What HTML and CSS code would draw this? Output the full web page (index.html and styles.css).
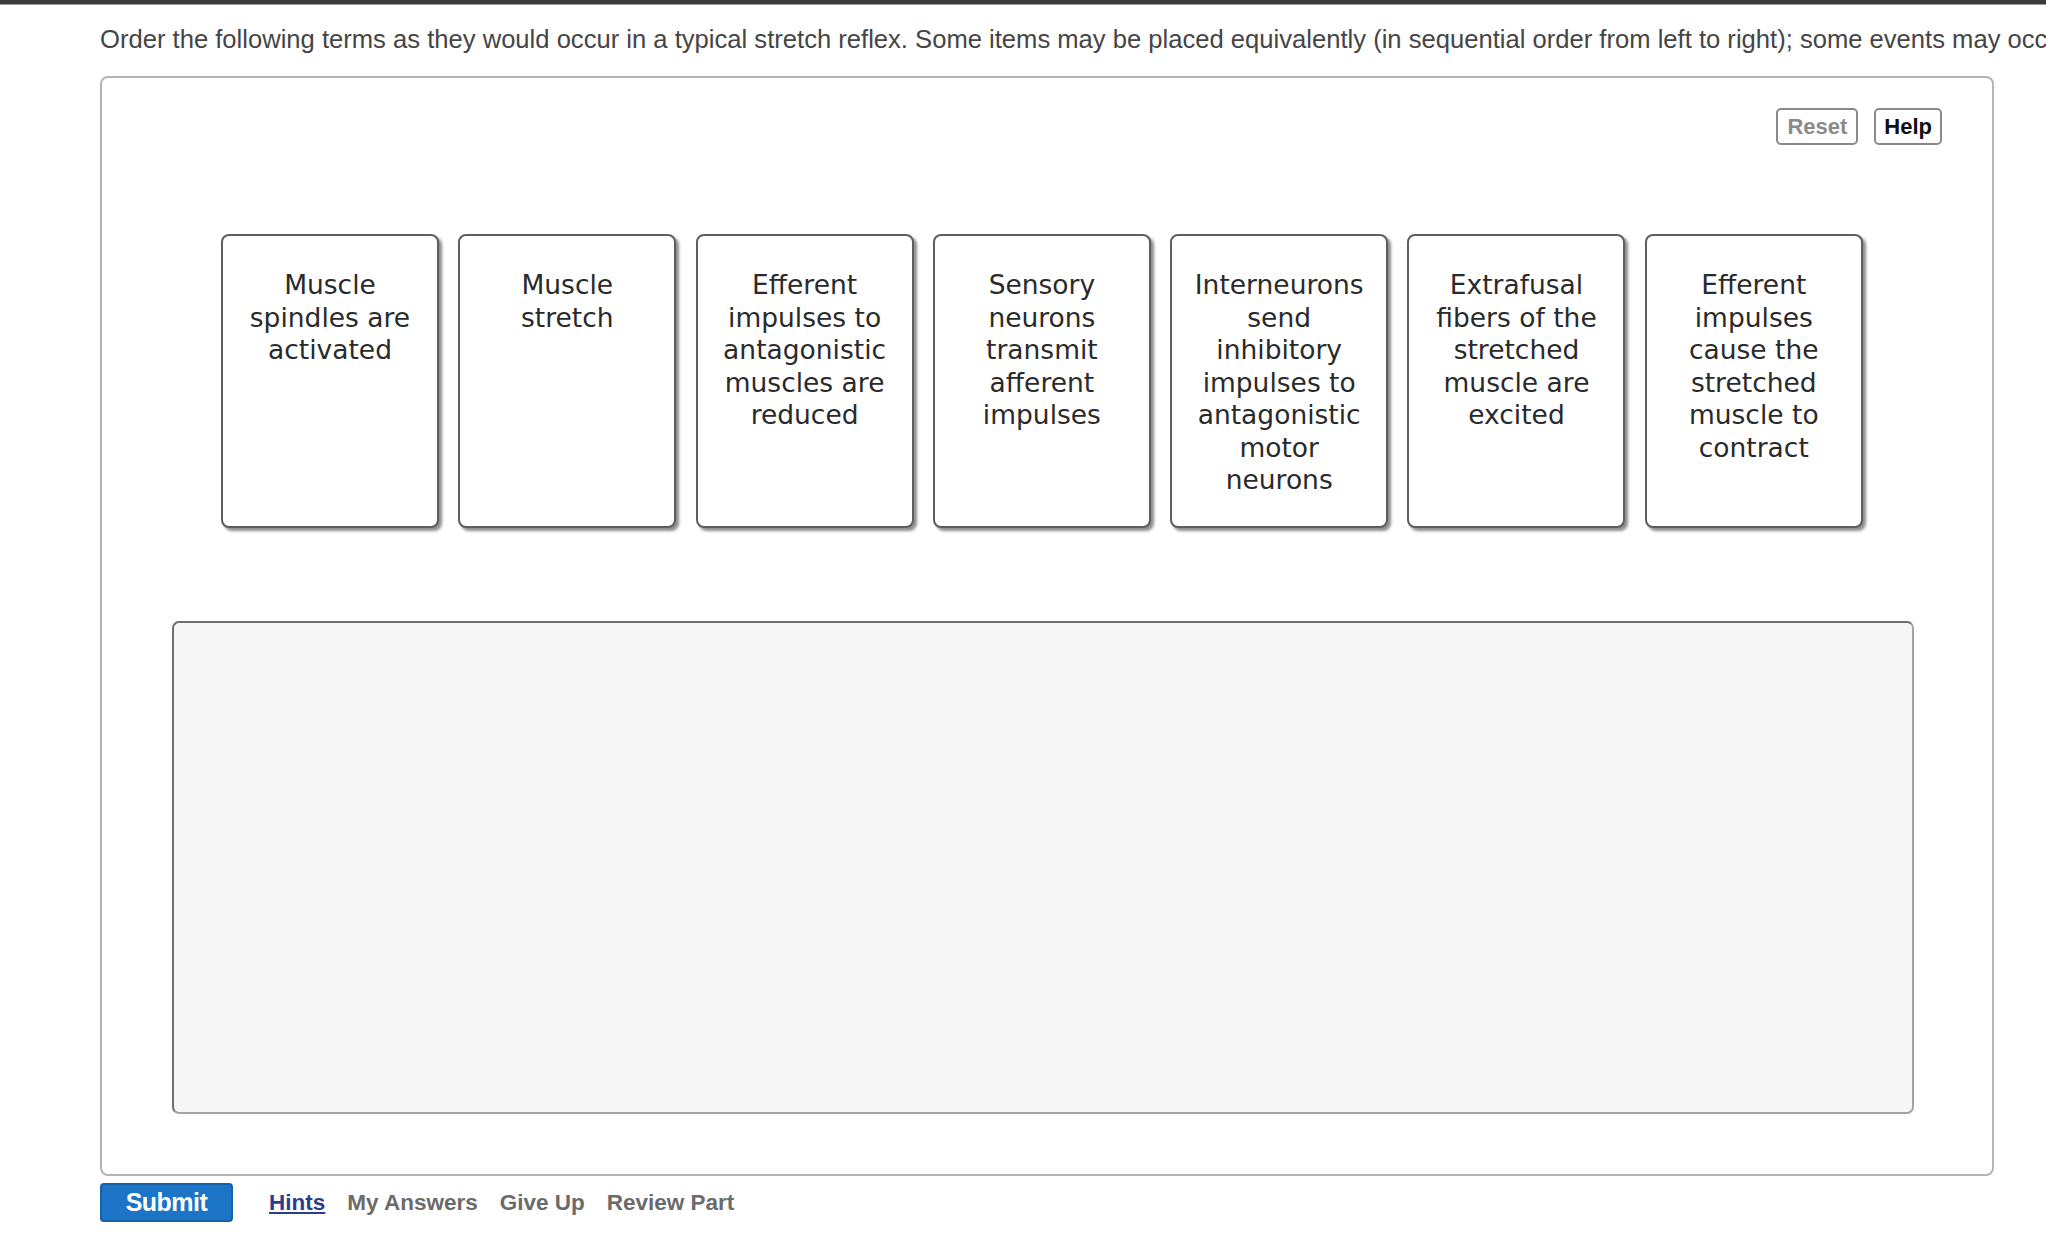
FILE: index.html
```html
<!DOCTYPE html>
<html lang="en">
<head>
  <meta charset="UTF-8" />
  <meta name="viewport" content="width=device-width, initial-scale=1.0" />
  <title>Stretch Reflex Ordering</title>
  <link rel="stylesheet" href="styles.css">
</head>
<body>
  <div class="topbar"></div>
  <p class="prompt">Order the following terms as they would occur in a typical stretch reflex. Some items may be placed equivalently (in sequential order from left to right); some events may occur simultaneously.</p>

  <div class="question">
    <div class="toolbar">
      <button class="tool-btn reset">Reset</button>
      <button class="tool-btn help">Help</button>
    </div>

    <div class="cards">
      <div class="card">Muscle spindles are activated</div>
      <div class="card">Muscle stretch</div>
      <div class="card">Efferent impulses to antagonistic muscles are reduced</div>
      <div class="card">Sensory neurons transmit afferent impulses</div>
      <div class="card">Interneurons send inhibitory impulses to antagonistic motor neurons</div>
      <div class="card">Extrafusal fibers of the stretched muscle are excited</div>
      <div class="card">Efferent impulses cause the stretched muscle to contract</div>
    </div>

    <div class="dropzone"></div>
  </div>

  <div class="actions">
    <button class="submit">Submit</button>
    <a href="#" class="link hints">Hints</a>
    <a href="#" class="link">My Answers</a>
    <a href="#" class="link">Give Up</a>
    <a href="#" class="link">Review Part</a>
  </div>
</body>
</html>
```

FILE: styles.css
```css
body {
  margin: 0;
  padding: 0;
  background: white;
  font-family: "Liberation Sans", Arial, sans-serif;
  color: #444;
  overflow: hidden;
}
.topbar {
  height: 4px;
  background: #3a3a3a;
  border-bottom: 1px solid #999;
}
/* long instruction line stays on one row, clipped at the window edge */
.prompt {
  margin: 20px 0 23px 100px;
  font-size: 25.6px;
  line-height: 28px;
  white-space: nowrap;
  overflow: hidden;
  color: #454545;
}
.question {
  margin-left: 100px;
  width: 1894px;
  box-sizing: border-box;
  border: 2px solid #b4b4b4;
  border-radius: 8px;
  padding-bottom: 60px;
}
.toolbar {
  display: flex;
  justify-content: flex-end;
  gap: 16px;
  padding: 30px 50px 0 0;
}
.tool-btn {
  height: 37px;
  padding: 0 9px;
  background: white;
  border: 2px solid #8a8a8a;
  border-radius: 5px;
  font-family: "Liberation Sans", Arial, sans-serif;
  font-size: 22px;
  font-weight: bold;
}
.reset {
  color: #8a8a8a;
}
.help {
  padding: 0 8px;
  color: #111;
}
.cards {
  display: flex;
  gap: 19.3px;
  padding-left: 119px;
  margin-top: 89px;
}
.card {
  width: 218px;
  height: 294px;
  box-sizing: border-box;
  padding: 33px 14px 0;
  background: white;
  border: 2px solid #5e5e5e;
  border-radius: 8px;
  box-shadow: 3px 3px 3px rgba(0, 0, 0, 0.45);
  font-family: "DejaVu Sans", Verdana, sans-serif;
  font-size: 26.5px;
  line-height: 32.5px;
  text-align: center;
  color: #2a2a2a;
}
.dropzone {
  width: 1742px;
  height: 493px;
  box-sizing: border-box;
  margin: 93px 0 0 70px;
  background: #f6f6f6;
  border: 2px solid #a4a4a4;
  border-top-color: #6e6e6e;
  border-left-color: #6e6e6e;
  border-radius: 7px;
}
.actions {
  display: flex;
  align-items: center;
  margin: 7px 0 0 100px;
}
.submit {
  width: 133px;
  height: 39px;
  margin-right: 36px;
  background: #1b74c5;
  border: 2px solid #1562a9;
  border-radius: 4px;
  color: white;
  font-family: "Liberation Sans", Arial, sans-serif;
  font-size: 25px;
  font-weight: bold;
  letter-spacing: -0.5px;
}
.link {
  margin-right: 22px;
  font-size: 22.5px;
  font-weight: bold;
  color: #6b6b6b;
  text-decoration: none;
}
.hints {
  color: #2c3d8c;
  text-decoration: underline;
}
```
